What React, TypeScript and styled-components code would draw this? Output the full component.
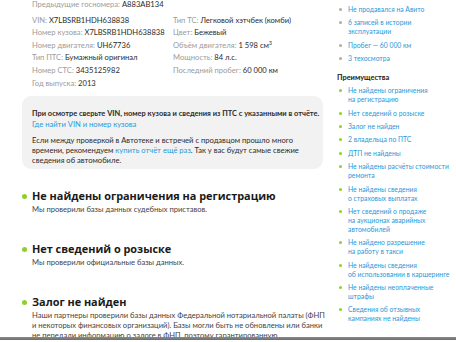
import styled, { createGlobalStyle } from 'styled-components';

// Global page reset
const GlobalStyle = createGlobalStyle`
    html, body {
        margin: 0;
        padding: 0;
        background: #fff;
        overflow: hidden;
    }
    body {
        font-family: Lato, 'Open Sans', sans-serif;
        color: #2b2b2b;
    }
`

const Page = styled.div`
    display: flex;
    width: 456px;
    height: 342px;
    overflow: hidden;
`
const Main = styled.div`
    width: 301px;
    flex-shrink: 0;
    margin-left: 22px;
    margin-top: -2px;
    display: flex;
    flex-direction: column;
`
const Specs = styled.div`
    display: grid;
    grid-template-columns: 141px 1fr;
    padding: 0 10px;
`
const SpecCol = styled.div`
    display: flex;
    flex-direction: column;
`
const Spec = styled.div<{ $gap?: number }>`
    font-size: 7.6px;
    height: 12.6px;
    line-height: 12.6px;
    white-space: nowrap;
    margin-bottom: ${p => p.$gap || 0}px;
    span { color: #9b9b9b; }
    b { font-weight: 400; color: #2b2b2b; }
    sup { font-size: 5px; vertical-align: 3px; line-height: 0; }
`
const Notice = styled.div`
    margin-top: 7px;
    background: #f2f2f2;
    border-radius: 9px;
    padding: 13px 10px 4px;
    display: flex;
    flex-direction: column;
`
const NoticeLine = styled.div<{ $strong?: boolean; $link?: boolean; $gap?: number }>`
    font-size: ${p => (p.$strong ? 7.45 : 7.6)}px;
    height: 10px;
    line-height: 10px;
    white-space: nowrap;
    font-weight: ${p => (p.$strong ? 700 : 400)};
    color: ${p => (p.$link ? '#2a98d8' : '#2b2b2b')};
    margin-bottom: ${p => p.$gap || 0}px;
    em { color: #2a98d8; font-style: normal; }
`
const Section = styled.div<{ $top: number }>`
    margin-top: ${p => p.$top}px;
    padding-left: 10px;
`
const Heading = styled.h2`
    position: relative;
    margin: 0;
    font-family: 'Open Sans', Lato, sans-serif;
    font-weight: 700;
    font-size: 10.9px;
    height: 14px;
    line-height: 14px;
    color: #1a1a1a;
    white-space: nowrap;
    &::before {
        content: '';
        position: absolute;
        left: -10px;
        top: 5px;
        width: 5px;
        height: 5px;
        border-radius: 50%;
        background: #8fcf2b;
    }
`
const Text = styled.div`
    margin-top: 1px;
    font-size: 7.6px;
    line-height: 10px;
    color: #444;
    white-space: nowrap;
`
const Side = styled.aside`
    width: 118px;
    flex-shrink: 0;
    margin-left: 14px;
    margin-top: -8px;
    display: flex;
    flex-direction: column;
`
const SideTitle = styled.div<{ $top?: number }>`
    font-size: 7.4px;
    line-height: 10px;
    font-weight: 700;
    color: #1a1a1a;
    margin-top: ${p => p.$top || 0}px;
    margin-bottom: 3px;
`
const List = styled.ul`
    list-style: none;
    margin: 0;
    padding: 0;
    display: flex;
    flex-direction: column;
    gap: 4.4px;
`
const Item = styled.li<{ $green?: boolean }>`
    position: relative;
    padding-left: 11px;
    font-size: 6.8px;
    line-height: 9px;
    color: #2a98d8;
    white-space: nowrap;
    &::before {
        content: '';
        position: absolute;
        left: 2px;
        top: 3px;
        width: 3px;
        height: 3px;
        border-radius: 50%;
        background: ${p => (p.$green ? '#8fcf2b' : '#b7aa9c')};
    }
`
const BottomBar = styled.div`
    position: fixed;
    left: 0;
    right: 0;
    top: 337px;
    height: 3px;
    background: linear-gradient(#8a8a8a, #6e6e6e);
`

const summary = [
    'Не продавался на Авито',
    '6 записей в истории\nэксплуатации',
    'Пробег — 60 000 км',
    '3 техосмотра',
];

const advantages = [
    'Не найдены ограничения\nна регистрацию',
    'Нет сведений о розыске',
    'Залог не найден',
    '2 владельца по ПТС',
    'ДТП не найдены',
    'Не найдены расчёты стоимости\nремонта',
    'Не найдены сведения\nо страховых выплатах',
    'Нет сведений о продаже\nна аукционах аварийных\nавтомобилей',
    'Не найдено разрешение\nна работу в такси',
    'Не найдены сведения\nоб использовании в каршеринге',
    'Не найдены неоплаченные\nштрафы',
    'Сведения об отзывных\nкампаниях не найдены',
];

const lines = (s: string) =>
    s.split('\n').map((l, i) => (
        <span key={i}>
            {i > 0 && <br />}
            {l}
        </span>
    ));

const App = () => {
    return (
        <>
            <GlobalStyle />
            <Page>
                <Main>
                    <Specs>
                        <SpecCol>
                            <Spec $gap={3}><span>Предыдущие госномера: </span><b>А883АВ134</b></Spec>
                            <Spec><span>VIN: </span><b>X7LBSRB1HDH638838</b></Spec>
                            <Spec><span>Номер кузова: </span><b>X7LBSRB1HDH638838</b></Spec>
                            <Spec><span>Номер двигателя: </span><b>UH67736</b></Spec>
                            <Spec><span>Тип ПТС: </span><b>Бумажный оригинал</b></Spec>
                            <Spec><span>Номер СТС: </span><b>3435125982</b></Spec>
                            <Spec><span>Год выпуска: </span><b>2013</b></Spec>
                        </SpecCol>
                        <SpecCol>
                            <Spec $gap={3}>&nbsp;</Spec>
                            <Spec><span>Тип ТС: </span><b>Легковой хэтчбек (комби)</b></Spec>
                            <Spec><span>Цвет: </span><b>Бежевый</b></Spec>
                            <Spec><span>Объём двигателя: </span><b>1 598 см<sup>3</sup></b></Spec>
                            <Spec><span>Мощность: </span><b>84 л.с.</b></Spec>
                            <Spec><span>Последний пробег: </span><b>60 000 км</b></Spec>
                        </SpecCol>
                    </Specs>

                    <Notice>
                        <NoticeLine $strong>При осмотре сверьте VIN, номер кузова и сведения из ПТС с указанными в отчёте.</NoticeLine>
                        <NoticeLine $link $gap={6}>Где найти VIN и номер кузова</NoticeLine>
                        <NoticeLine>Если между проверкой в Автотеке и встречей с продавцом прошло много</NoticeLine>
                        <NoticeLine>времени, рекомендуем <em>купить отчёт ещё раз</em>. Так у вас будут самые свежие</NoticeLine>
                        <NoticeLine>сведения об автомобиле.</NoticeLine>
                    </Notice>

                    <Section $top={20}>
                        <Heading>Не найдены ограничения на регистрацию</Heading>
                        <Text>Мы проверили базы данных судебных приставов.</Text>
                    </Section>
                    <Section $top={28}>
                        <Heading>Нет сведений о розыске</Heading>
                        <Text>Мы проверили официальные базы данных.</Text>
                    </Section>
                    <Section $top={28}>
                        <Heading>Залог не найден</Heading>
                        <Text>
                            Наши партнеры проверили базы данных Федеральной нотариальной палаты (ФНП<br />
                            и некоторых финансовых организаций). Базы могли быть не обновлены или банки<br />
                            не передали информацию о залоге в ФНП, поэтому гарантированную
                        </Text>
                    </Section>
                </Main>

                <Side>
                    <SideTitle>Кратко</SideTitle>
                    <List>
                        {summary.map(s => <Item key={s}>{lines(s)}</Item>)}
                    </List>
                    <SideTitle $top={10}>Преимущества</SideTitle>
                    <List>
                        {advantages.map(s => <Item key={s} $green>{lines(s)}</Item>)}
                    </List>
                </Side>
            </Page>
            <BottomBar />
        </>
    );
};

export default App;
